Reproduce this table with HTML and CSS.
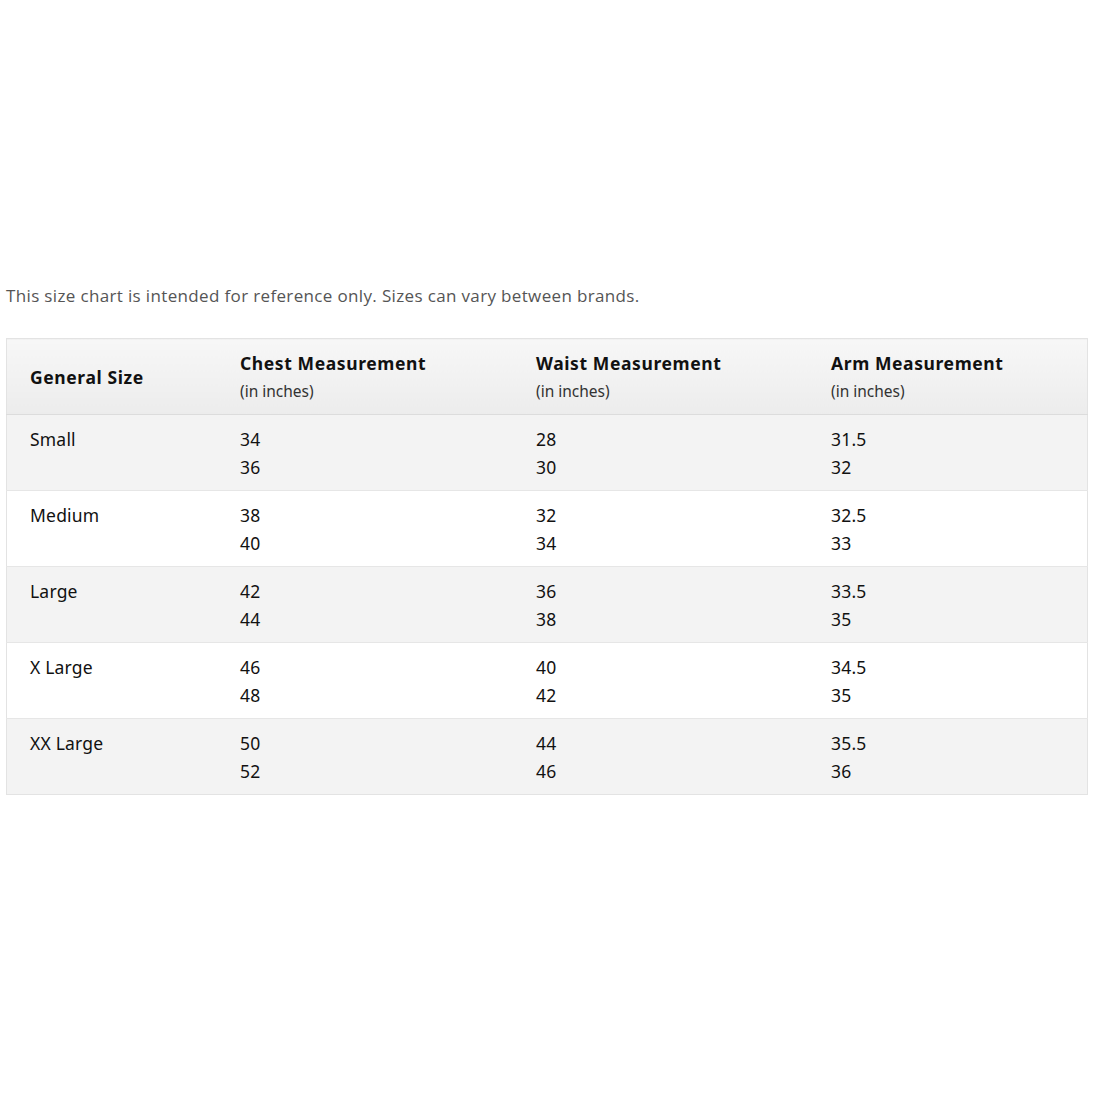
FILE: index.html
```html
<!DOCTYPE html>
<html>
<head>
<meta charset="utf-8">
<link rel="stylesheet" href="styles.css">
</head>
<body>
<div class="page">
  <p class="caption">This size chart is intended for reference only. Sizes can vary between brands.</p>
  <table class="chart">
    <thead>
      <tr>
        <th class="c1">General Size</th>
        <th class="c2">Chest Measurement<span class="unit">(in inches)</span></th>
        <th class="c3">Waist Measurement<span class="unit">(in inches)</span></th>
        <th class="c4">Arm Measurement<span class="unit">(in inches)</span></th>
      </tr>
    </thead>
    <tbody>
      <tr class="odd"><td>Small</td><td>34<br>36</td><td>28<br>30</td><td>31.5<br>32</td></tr>
      <tr><td>Medium</td><td>38<br>40</td><td>32<br>34</td><td>32.5<br>33</td></tr>
      <tr class="odd"><td>Large</td><td>42<br>44</td><td>36<br>38</td><td>33.5<br>35</td></tr>
      <tr><td>X Large</td><td>46<br>48</td><td>40<br>42</td><td>34.5<br>35</td></tr>
      <tr class="odd"><td>XX Large</td><td>50<br>52</td><td>44<br>46</td><td>35.5<br>36</td></tr>
    </tbody>
  </table>
</div>
</body>
</html>
```

FILE: styles.css
```css
html, body {
  margin: 0;
  padding: 0;
  background: #fff;
}
.page {
  padding: 284px 12px 0 6px;
  font-family: "Noto Sans", "Open Sans", sans-serif;
}
.caption {
  margin: 0 0 30px 0;
  font-family: "Open Sans", "Noto Sans", sans-serif;
  font-size: 17px;
  letter-spacing: 0.35px;
  line-height: 24px;
  color: #555;
}
.chart {
  width: 1082px;
  table-layout: fixed;
  border-collapse: collapse;
  border: 1px solid #e3e3e3;
  color: #111;
}
.chart th {
  text-align: left;
  font-weight: bold;
  font-size: 17.5px;
  letter-spacing: 0.6px;
  line-height: 28px;
  padding: 10px 10px 9px 23px;
  background: linear-gradient(#f7f7f7, #ececec);
  border-bottom: 1px solid #dcdcdc;
  vertical-align: middle;
}
.chart th.c1 { width: 177px; }
.chart th.c2 { width: 263px; }
.chart th.c3 { width: 262px; }
.chart .unit {
  display: block;
  font-weight: normal;
  letter-spacing: 0;
  font-size: 15.5px;
  color: #333;
}
.chart td {
  font-size: 17.5px;
  letter-spacing: 0.2px;
  line-height: 28px;
  padding: 10px 10px 9px 23px;
  vertical-align: top;
  border-top: 1px solid #e6e6e6;
  color: #111;
}
.chart tr.odd td {
  background: #f3f3f3;
}
```
